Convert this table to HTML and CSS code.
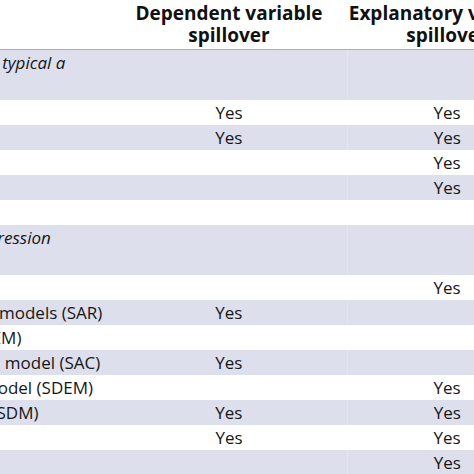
FILE: index.html
```html
<!DOCTYPE html>
<html lang="en">
<head>
<meta charset="utf-8">
<title>Spillover table</title>
<link rel="stylesheet" href="styles.css">
</head>
<body>
<div class="frame">
<table class="models">
  <colgroup>
    <col class="c-label">
    <col class="c-dep">
    <col class="c-exp">
    <col class="c-err">
  </colgroup>
  <thead>
    <tr>
      <th class="label">Model</th>
      <th>Dependent variable<br>spillover</th>
      <th>Explanatory variable<br>spillover</th>
      <th>Error term<br>spillover</th>
    </tr>
  </thead>
  <tbody>
    <tr class="shade section">
      <td class="label">Non-spatial regression,&nbsp; typical a<br>priori</td>
      <td></td><td class="seam"></td><td></td>
    </tr>
    <tr><td class="label"></td><td>Yes</td><td class="seam">Yes</td><td></td></tr>
    <tr class="shade"><td class="label"></td><td>Yes</td><td class="seam">Yes</td><td></td></tr>
    <tr><td class="label"></td><td></td><td class="seam">Yes</td><td></td></tr>
    <tr class="shade"><td class="label"></td><td></td><td class="seam">Yes</td><td></td></tr>
    <tr><td class="label"></td><td></td><td class="seam"></td><td></td></tr>
    <tr class="shade section">
      <td class="label">Spatial econometric regression<br>&nbsp;</td>
      <td></td><td class="seam"></td><td></td>
    </tr>
    <tr><td class="label"></td><td></td><td class="seam">Yes</td><td></td></tr>
    <tr class="shade"><td class="label">Spatial autoregressive models (SAR)</td><td>Yes</td><td class="seam"></td><td></td></tr>
    <tr><td class="label">Spatial error model (SEM)</td><td></td><td class="seam"></td><td>Yes</td></tr>
    <tr class="shade"><td class="label">Spatial autocorrelation model (SAC)</td><td>Yes</td><td class="seam"></td><td>Yes</td></tr>
    <tr><td class="label">Spatial Durbin error model (SDEM)</td><td></td><td class="seam">Yes</td><td>Yes</td></tr>
    <tr class="shade"><td class="label">Spatial Durbin model (SDM)</td><td>Yes</td><td class="seam">Yes</td><td></td></tr>
    <tr><td class="label"></td><td>Yes</td><td class="seam">Yes</td><td>Yes</td></tr>
    <tr class="shade"><td class="label"></td><td></td><td class="seam">Yes</td><td>Yes</td></tr>
  </tbody>
</table>
</div>
</body>
</html>
```

FILE: styles.css
```css
html, body {
  margin: 0;
  padding: 0;
  background: #ffffff;
}

.frame {
  width: 474px;
  height: 474px;
  overflow: hidden;
}

.models {
  margin-left: -180px;
  border-collapse: collapse;
  table-layout: fixed;
  width: 926px;
  font-family: "Open Sans", "Noto Sans", sans-serif;
  font-size: 17px;
  color: #161616;
}

.c-label { width: 291px; }
.c-dep { width: 236px; }
.c-exp { width: 200px; }
.c-err { width: 200px; }

.models th {
  font-weight: 700;
  font-size: 19px;
  line-height: 22px;
  height: 48px;
  padding: 0 0 1px 0;
  text-align: center;
  vertical-align: middle;
  border-bottom: 1px solid #9fb0cc;
  color: #111111;
}

.models th.label {
  color: transparent;
}

.models td {
  height: 25px;
  padding: 0;
  line-height: 25px;
  text-align: center;
  vertical-align: top;
  white-space: nowrap;
}

.models td.label {
  text-align: left;
}

.models tr.section td {
  height: 50px;
}

.models tr.section td.label {
  font-style: italic;
}

.models tr.shade td {
  background: #dddfec;
}

.models tr.shade td.seam {
  border-left: 1px solid #e4e6f1;
}
```
